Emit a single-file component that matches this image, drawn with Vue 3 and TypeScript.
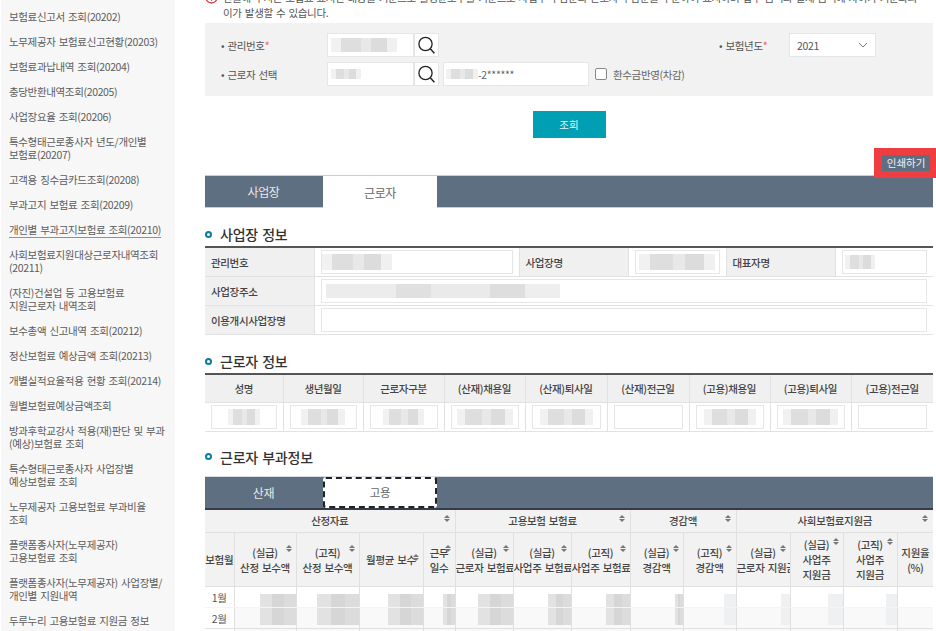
<script setup lang="ts">
const menu: string[] = [
  '보험료신고서 조회(20202)',
  '노무제공자 보험료신고현황(20203)',
  '보험료과납내역 조회(20204)',
  '충당반환내역조회(20205)',
  '사업장요율 조회(20206)',
  '특수형태근로종사자 년도/개인별\n보험료(20207)',
  '고객용 징수금카드조회(20208)',
  '부과고지 보험료 조회(20209)',
  '개인별 부과고지보험료 조회(20210)',
  '사회보험료지원대상근로자내역조회\n(20211)',
  '(자진)건설업 등 고용보험료\n지원근로자 내역조회',
  '보수총액 신고내역 조회(20212)',
  '정산보험료 예상금액 조회(20213)',
  '개별실적요율적용 현황 조회(20214)',
  '월별보험료예상금액조회',
  '방과후학교강사 적용(재)판단 및 부과\n(예상)보험료 조회',
  '특수형태근로종사자 사업장별\n예상보험료 조회',
  '노무제공자 고용보험료 부과비율\n조회',
  '플랫폼종사자(노무제공자)\n고용보험료 조회',
  '플랫폼종사자(노무제공자) 사업장별/\n개인별 지원내역',
  '두루누리 고용보험료 지원금 정보',
]
const activeMenu = 8

const workerHeads = ['성명', '생년월일', '근로자구분', '(산재)채용일', '(산재)퇴사일', '(산재)전근일', '(고용)채용일', '(고용)퇴사일', '(고용)전근일']
const workerBlur = [32, 44, 41, 56, 53, 0, 52, 55, 0]
const workerCols = [78, 80, 81, 81, 82, 82, 81, 81, 82]

const feeCols = [29, 62, 63, 64, 32, 58, 58, 59, 53, 53, 54, 53, 54, 36]
const feeGroups = [
  { label: '산정자료', span: 5 },
  { label: '고용보험 보험료', span: 3 },
  { label: '경감액', span: 2 },
  { label: '사회보험료지원금', span: 4 },
]
const feeHeads: { lines: string[]; sort: boolean }[] = [
  { lines: ['보험월'], sort: false },
  { lines: ['(실급)', '산정 보수액'], sort: true },
  { lines: ['(고직)', '산정 보수액'], sort: true },
  { lines: ['월평균 보수'], sort: true },
  { lines: ['근무', '일수'], sort: true },
  { lines: ['(실급)', '근로자 보험료'], sort: true },
  { lines: ['(실급)', '사업주 보험료'], sort: true },
  { lines: ['(고직)', '사업주 보험료'], sort: true },
  { lines: ['(실급)', '경감액'], sort: true },
  { lines: ['(고직)', '경감액'], sort: true },
  { lines: ['(실급)', '근로자 지원금'], sort: true },
  { lines: ['(실급)', '사업주', '지원금'], sort: true },
  { lines: ['(고직)', '사업주', '지원금'], sort: true },
  { lines: ['지원율', '(%)'], sort: false },
]
const feeBlur = [36, 42, 35, 12, 35, 23, 24, 8, 12, 9, 15, 11, 0]
const months = ['1월', '2월', '']
</script>

<template>
  <div class="page">
    <aside class="side">
      <a v-for="(m, i) in menu" :key="i" class="side-item">
        <span :class="{ 'side-active': i === activeMenu }">{{ m }}</span>
      </a>
    </aside>

    <main class="main">
      <div class="notice">
        <svg class="notice-icon" width="13" height="13" viewBox="0 0 13 13">
          <circle cx="6.5" cy="6.5" r="5.5" fill="none" stroke="#e0393e" stroke-width="1.3" />
          <path d="M6.5 3v4.4M6.5 8.6v1.2" stroke="#e0393e" stroke-width="1.3" />
        </svg>
        <p>산출해 주시는 보험료 표시된 내용을 기준으로 월평균보수를 기준으로 사업주 부담분과 근로자 부담분을 구분하여 표시하며 납부 금액과 실제 금액에 차이가 기준과의<br />이가 발생할 수 있습니다.</p>
      </div>

      <section class="search">
        <div class="search-row">
          <label class="field-label">• 관리번호<em>*</em></label>
          <div class="lookup">
            <span class="box lookup-input"><i class="blur blur-a"></i></span>
            <span class="box lookup-btn">
              <svg width="19" height="19" viewBox="0 0 19 19"><circle cx="8.5" cy="8" r="6.6" fill="none" stroke="#222" stroke-width="1.3" /><path d="M13.2 12.8 17.4 17.2" stroke="#222" stroke-width="1.5" /></svg>
            </span>
          </div>
          <label class="field-label year-label">• 보험년도<em>*</em></label>
          <span class="box year">2021
            <svg width="10" height="6" viewBox="0 0 10 6"><path d="M1 1l4 4 4-4" fill="none" stroke="#777" stroke-width="1" /></svg>
          </span>
        </div>
        <div class="search-row">
          <label class="field-label">• 근로자 선택</label>
          <div class="lookup">
            <span class="box lookup-input"><i class="blur blur-b"></i></span>
            <span class="box lookup-btn">
              <svg width="19" height="19" viewBox="0 0 19 19"><circle cx="8.5" cy="8" r="6.6" fill="none" stroke="#222" stroke-width="1.3" /><path d="M13.2 12.8 17.4 17.2" stroke="#222" stroke-width="1.5" /></svg>
            </span>
          </div>
          <span class="box rrn"><i class="blur blur-c"></i>-2******</span>
          <span class="check"></span>
          <span class="check-label">환수금반영(차감)</span>
        </div>
      </section>

      <div class="submit-row"><button class="submit">조회</button></div>

      <div class="print-row">
        <div class="print-mark"><button class="print">인쇄하기</button></div>
      </div>

      <nav class="tabs">
        <span class="tab">사업장</span>
        <span class="tab tab-on">근로자</span>
      </nav>

      <h2 class="title"><i class="dot"></i>사업장 정보</h2>
      <table class="info">
        <colgroup>
          <col style="width: 109px" /><col style="width: 205px" /><col style="width: 109px" />
          <col style="width: 98px" /><col style="width: 109px" /><col style="width: 98px" />
        </colgroup>
        <tbody>
          <tr>
            <th>관리번호</th><td><span class="cell-input"><i class="blur blur-d"></i></span></td>
            <th>사업장명</th><td><span class="cell-input center"><i class="blur blur-e"></i></span></td>
            <th>대표자명</th><td><span class="cell-input"><i class="blur blur-f"></i></span></td>
          </tr>
          <tr>
            <th>사업장주소</th>
            <td colspan="5"><span class="cell-input"><i class="blur blur-g"></i></span></td>
          </tr>
          <tr>
            <th>이용개시사업장명</th>
            <td colspan="5"><span class="cell-input"></span></td>
          </tr>
        </tbody>
      </table>

      <h2 class="title"><i class="dot"></i>근로자 정보</h2>
      <table class="worker">
        <colgroup>
          <col v-for="(w, i) in workerCols" :key="i" :style="{ width: w + 'px' }" />
        </colgroup>
        <thead>
          <tr><th v-for="h in workerHeads" :key="h">{{ h }}</th></tr>
        </thead>
        <tbody>
          <tr>
            <td v-for="(b, i) in workerBlur" :key="i">
              <span class="cell-input center">
                <i v-if="b" class="blur blur-h" :style="{ width: b + 'px' }"></i>
              </span>
            </td>
          </tr>
        </tbody>
      </table>

      <h2 class="title third"><i class="dot"></i>근로자 부과정보</h2>
      <nav class="tabs tabs-sub">
        <span class="tab">산재</span>
        <span class="tab tab-focus">고용</span>
      </nav>
      <table class="fee">
        <colgroup>
          <col v-for="(w, i) in feeCols" :key="i" :style="{ width: w + 'px' }" />
        </colgroup>
        <thead>
          <tr class="fee-groups">
            <th v-for="g in feeGroups" :key="g.label" :colspan="g.span">
              {{ g.label }}<i class="sort"></i>
            </th>
          </tr>
          <tr class="fee-heads">
            <th v-for="(h, i) in feeHeads" :key="i">
              <div v-for="l in h.lines" :key="l" class="fee-line">{{ l }}</div>
              <i v-if="h.sort" class="sort" :class="'sort-' + h.lines.length"></i>
            </th>
          </tr>
        </thead>
        <tbody>
          <tr v-for="(m, r) in months" :key="r">
            <td class="month">{{ m }}</td>
            <td v-for="(b, i) in feeBlur" :key="i" class="num" :class="r === 0 ? 'row-first' : 'row-next'">
              <i v-if="b && r < 2" class="fee-blur" :class="{ 'fee-soft': i > 7 }" :style="{ width: b + 'px' }"></i>
            </td>
          </tr>
        </tbody>
      </table>
    </main>
  </div>
</template>

<style scoped>
.page {
  display: flex;
  width: 936px;
  height: 631px;
  overflow: hidden;
  background: #fff;
  color: #555;
  font-family: "Noto Sans CJK KR", "Noto Sans", sans-serif;
  font-size: 10.5px;
  letter-spacing: -0.35px;
  word-spacing: 1.2px;
}
.side {
  flex: 0 0 174px;
  margin-left: 1px;
  padding-top: 4px;
  background: #f7f7f7;
}
.side-item {
  display: block;
  padding: 6px 8px;
  line-height: 13px;
  white-space: pre-line;
  color: #5c5c5c;
}
.side-active { border-bottom: 1px solid #7d97a3; }
.main {
  flex: 0 0 728px;
  margin-left: 30px;
  margin-top: -7px;
}
.notice { display: flex; height: 30px; }
.notice-icon { flex: none; margin: -2px 5px 0 0; }
.notice p {
  margin: -2px 0 0;
  line-height: 14.5px;
  white-space: nowrap;
  color: #555;
}
.search {
  display: flex;
  flex-direction: column;
  gap: 5px;
  padding: 10px 57px 10px 16px;
  background: #f2f2f2;
}
.search-row { display: flex; align-items: center; height: 24px; }
.field-label { flex: 0 0 106px; color: #555; }
.field-label em { color: #ef5a5a; font-style: normal; }
.year-label { flex: 0 0 70px; margin-left: auto; }
.box {
  display: flex;
  align-items: center;
  box-sizing: border-box;
  height: 24px;
  background: #fff;
  border: 1px solid #e4e6e8;
}
.lookup { display: flex; width: 112px; }
.lookup-input { flex: 1; padding-left: 2px; }
.lookup-btn { flex: 0 0 25px; justify-content: center; }
.year { width: 87px; justify-content: space-between; padding: 0 7px; color: #555; }
.rrn { width: 146px; margin-left: 4px; padding-left: 2px; color: #666; }
.check {
  box-sizing: border-box;
  width: 12px;
  height: 12px;
  margin-left: 6px;
  background: #fff;
  border: 1px solid #888;
  border-radius: 2px;
}
.check-label { margin-left: 6px; color: #666; }
.submit-row { display: flex; justify-content: center; margin-top: 15px; }
.submit {
  width: 73px;
  height: 27px;
  padding: 0;
  border: 0;
  background: #009fb3;
  color: #e8f6f8;
  font: inherit;
}
.print-row {
  display: flex;
  justify-content: flex-end;
  height: 37px;
  margin-right: -3px;
}
.print-mark {
  position: relative;
  z-index: 1;
  display: flex;
  align-items: center;
  justify-content: center;
  box-sizing: border-box;
  width: 62px;
  height: 30px;
  margin-top: 10px;
  padding-left: 2px;
  background: #ef3e42;
}
.print {
  width: 48px;
  height: 16px;
  padding: 0;
  border: 0;
  background: #5f6f82;
  color: #f0f2f4;
  font: inherit;
  line-height: 16px;
}
.tabs {
  display: flex;
  box-sizing: border-box;
  height: 33px;
  background: #5f6f82;
  border-top: 1px solid #c6cdd4;
  border-bottom: 1px solid #c6cdd4;
}
.tab {
  display: flex;
  flex: 0 0 117px;
  align-items: center;
  justify-content: center;
  color: #e6e9ec;
  font-size: 12px;
}
.tab-on {
  flex-basis: 114px;
  margin-left: 1px;
  margin-bottom: -1px;
  background: #fff;
  color: #666;
}
.tabs-sub {
  height: 34px;
  border-top-color: #d8dce0;
  border-bottom: 2px solid #333c48;
}
.tab-focus {
  flex-basis: 114px;
  margin-left: 1px;
  box-sizing: border-box;
  background: #fff;
  color: #666;
  border: 2px dashed #222;
  border-radius: 3px;
  font-size: 11.5px;
}
.title {
  display: flex;
  align-items: center;
  height: 20px;
  margin: 16px 0 2px;
  color: #333;
  font-size: 14px;
  font-weight: 500;
  letter-spacing: -0.2px;
}
.title.third { margin: 15px 0 9px; }
.dot {
  box-sizing: border-box;
  width: 7px;
  height: 7px;
  margin-right: 8px;
  border: 2px solid #0b7d98;
  border-radius: 50%;
}
table {
  width: 728px;
  table-layout: fixed;
  border-collapse: collapse;
}
th { font-weight: 500; }
.info, .worker { border-top: 2px solid #555; }
.info th, .info td, .worker th, .worker td {
  border-bottom: 1px solid #e2e2e2;
  border-right: 1px solid #e2e2e2;
  padding: 0;
}
.info th:last-child, .info td:last-child, .worker th:last-child, .worker td:last-child { border-right: 0; }
.info tr { height: 29px; }
.info th {
  padding-left: 6px;
  background: #f0f0f0;
  color: #444;
  text-align: left;
}
.info td { padding: 2px 6px; }
.cell-input {
  display: flex;
  align-items: center;
  box-sizing: border-box;
  height: 24px;
  background: #fff;
  border: 1px solid #e6e6e6;
  overflow: hidden;
}
.center { justify-content: center; }
.worker thead tr { height: 28px; }
.worker th { background: #f0f0f0; color: #444; text-align: center; }
.worker tbody tr { height: 29px; }
.worker td { padding: 2px 6px; }
.fee th, .fee td {
  padding: 0;
  border-right: 1px solid #e0e0e0;
  border-bottom: 1px solid #e0e0e0;
}
.fee th:last-child, .fee td:last-child { border-right: 0; }
.fee th {
  position: relative;
  background: #f2f2f2;
  color: #444;
  text-align: center;
  white-space: nowrap;
  overflow: hidden;
}
.fee-groups { height: 23px; }
.fee-heads { height: 54px; }
.fee-line { line-height: 15px; }
.fee tbody tr { height: 20px; }
.fee tbody tr:nth-child(-n+1) td { border-bottom-color: #f4f4f4; }
.month { color: #555; text-align: center; }
.num { height: 20px; text-align: right; line-height: 0; overflow: hidden; }
.row-first { background: #fff; vertical-align: bottom; }
.row-next { background: #f9f9f9; vertical-align: top; }
.sort {
  position: absolute;
  top: 5px;
  right: 5px;
  width: 0;
  height: 0;
  border-left: 3px solid transparent;
  border-right: 3px solid transparent;
  border-bottom: 3px solid #777;
}
.sort::after {
  content: "";
  position: absolute;
  top: 4px;
  left: -3px;
  border-left: 3px solid transparent;
  border-right: 3px solid transparent;
  border-top: 3px solid #777;
}
.sort-1 { top: 21px; right: 4px; }
.sort-2 { top: 12px; right: 4px; }
.sort-3 { top: 5px; right: 4px; }
.blur {
  display: inline-block;
  height: 14px;
  background: linear-gradient(90deg, #f1f1f1 0 15%, #dedede 15% 45%, #e8e8e8 45% 60%, #dcdcdc 60% 85%, #f0f0f0 85%);
}
.blur-a { width: 66px; margin-left: 1px; }
.blur-b { width: 30px; height: 10px; margin-left: 1px; }
.blur-c { width: 32px; height: 10px; }
.blur-d { width: 70px; height: 16px; }
.blur-e { width: 76px; height: 16px; }
.blur-f { width: 30px; height: 14px; margin-left: 2px; }
.blur-g {
  width: 234px;
  margin-left: 4px;
  background: linear-gradient(90deg, #ececec 0 30%, #e0e0e0 30% 45%, #eaeaea 45% 70%, #dedede 70% 85%, #eeeeee 85%);
}
.blur-h { height: 16px; }
.fee-blur {
  display: inline-block;
  height: 13px;
  background: linear-gradient(90deg, #e2e2e2 0 33%, #d6d6d6 33% 66%, #dcdcdc 66%);
}
.row-next .fee-blur { height: 17px; }
.fee-soft { background: #eef0f1; }
</style>

<style>
html, body { margin: 0; overflow: hidden; background: #fff; }
</style>
